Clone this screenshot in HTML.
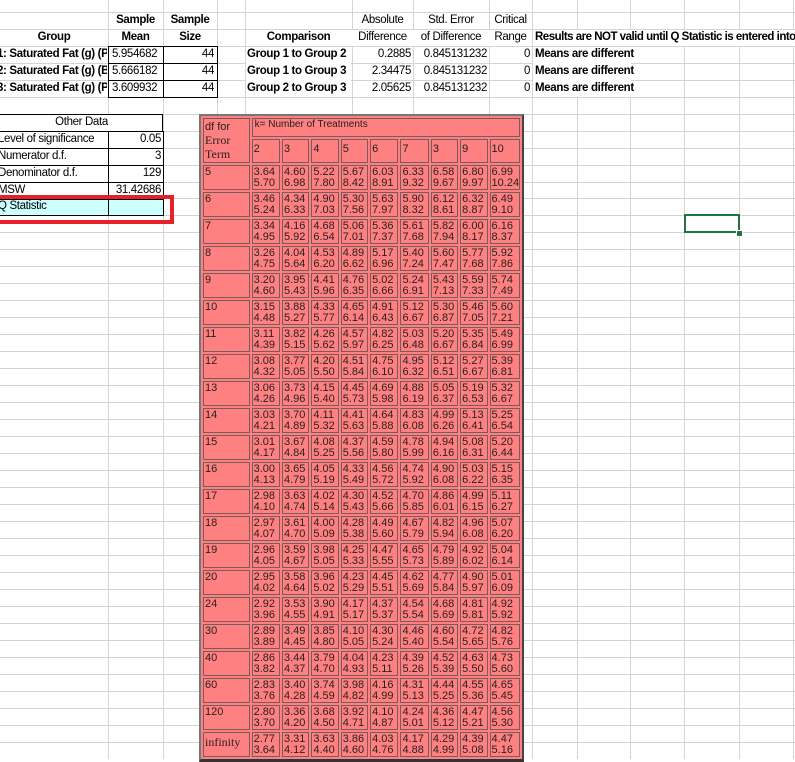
<!DOCTYPE html>
<html><head><meta charset="utf-8">
<style>
html,body{margin:0;padding:0}
body{width:795px;height:759px;overflow:hidden;position:relative;background:#fff;font-family:"Liberation Sans",Arial,sans-serif;font-size:11.5px;color:#000}
.hl{position:absolute;left:0;width:795px;height:1px;background:#d4d4d4}
.vl{position:absolute;top:0;height:759px;width:1px;background:#d4d4d4}
.t{position:absolute;height:17px;line-height:17px;white-space:nowrap;overflow:hidden;letter-spacing:-0.35px}
.b{font-weight:bold}
.r{text-align:right}
.c{text-align:center}
.bx{position:absolute;border:1px solid #000;box-sizing:border-box}
#q{position:absolute;left:199px;top:114px;width:325px;background:#ff8080;border:2px solid #777;border-right-color:#444;border-bottom:3px solid #333;border-collapse:separate;border-spacing:2px;table-layout:fixed}
#q td{background:#ff8080;border:1px solid #7a5a5a;padding:0 0 0 1px;vertical-align:top;font-family:"Liberation Sans",Arial,sans-serif;font-size:11px;line-height:11px;color:#2a2020;overflow:hidden;white-space:nowrap;box-sizing:border-box}
#q tr.d td{height:25px;padding-top:1px}
#q tr.d td.v{padding-top:1px}
#q td.sr,.sr{font-family:"Liberation Serif","Times New Roman",serif;font-size:12px}
</style></head><body>
<div class="hl" style="top:12px"></div><div class="hl" style="top:29px"></div><div class="hl" style="top:46px"></div><div class="hl" style="top:63px"></div><div class="hl" style="top:80px"></div><div class="hl" style="top:97px"></div><div class="hl" style="top:114px"></div><div class="hl" style="top:131px"></div><div class="hl" style="top:148px"></div><div class="hl" style="top:165px"></div><div class="hl" style="top:182px"></div><div class="hl" style="top:198px"></div><div class="hl" style="top:215px"></div><div class="hl" style="top:232px"></div><div class="hl" style="top:249px"></div><div class="hl" style="top:266px"></div><div class="hl" style="top:283px"></div><div class="hl" style="top:300px"></div><div class="hl" style="top:317px"></div><div class="hl" style="top:334px"></div><div class="hl" style="top:351px"></div><div class="hl" style="top:368px"></div><div class="hl" style="top:385px"></div><div class="hl" style="top:402px"></div><div class="hl" style="top:419px"></div><div class="hl" style="top:436px"></div><div class="hl" style="top:453px"></div><div class="hl" style="top:470px"></div><div class="hl" style="top:487px"></div><div class="hl" style="top:504px"></div><div class="hl" style="top:521px"></div><div class="hl" style="top:538px"></div><div class="hl" style="top:555px"></div><div class="hl" style="top:572px"></div><div class="hl" style="top:589px"></div><div class="hl" style="top:606px"></div><div class="hl" style="top:623px"></div><div class="hl" style="top:640px"></div><div class="hl" style="top:657px"></div><div class="hl" style="top:674px"></div><div class="hl" style="top:691px"></div><div class="hl" style="top:708px"></div><div class="hl" style="top:725px"></div><div class="hl" style="top:742px"></div>
<div class="vl" style="left:108px"></div><div class="vl" style="left:163px"></div><div class="vl" style="left:217px"></div><div class="vl" style="left:245px"></div><div class="vl" style="left:352px"></div><div class="vl" style="left:413px"></div><div class="vl" style="left:489px"></div><div class="vl" style="left:532px"></div><div class="vl" style="left:577px"></div><div class="vl" style="left:630px"></div><div class="vl" style="left:684px"></div><div class="vl" style="left:739px"></div><div class="vl" style="left:793px"></div>

<div style="position:absolute;left:246px;top:30px;width:286px;height:16px;background:#fff"></div>
<div style="position:absolute;left:533px;top:30px;width:262px;height:16px;background:#fff"></div>
<div style="position:absolute;left:533px;top:47px;width:98px;height:50px;background:#fff"></div>
<div style="position:absolute;left:246px;top:47px;width:105px;height:50px;background:#fff"></div>

<div class="t b c" style="left:108px;top:12px;width:55px">Sample</div>
<div class="t b c" style="left:163px;top:12px;width:54px">Sample</div>
<div class="t b c" style="left:0;top:29px;width:108px">Group</div>
<div class="t b c" style="left:108px;top:29px;width:55px">Mean</div>
<div class="t b c" style="left:163px;top:29px;width:54px">Size</div>
<div class="t b c" style="left:245px;top:29px;width:107px">Comparison</div>
<div class="t c" style="left:352px;top:12px;width:61px">Absolute</div>
<div class="t c" style="left:413px;top:12px;width:76px">Std. Error</div>
<div class="t c" style="left:489px;top:12px;width:43px">Critical</div>
<div class="t c" style="left:352px;top:29px;width:61px">Difference</div>
<div class="t c" style="left:413px;top:29px;width:76px">of Difference</div>
<div class="t c" style="left:489px;top:29px;width:43px">Range</div>
<div class="t b" style="left:535px;top:29px;width:260px;letter-spacing:-0.5px">Results are NOT valid until Q Statistic is entered into</div>

<div class="t b" style="left:0;top:46px;width:107px;text-indent:-3px">1: Saturated Fat (g) (Pe</div>
<div class="t b" style="left:0;top:63px;width:107px;text-indent:-3px">2: Saturated Fat (g) (Br</div>
<div class="t b" style="left:0;top:80px;width:107px;text-indent:-3px">3: Saturated Fat (g) (Pe</div>

<div class="bx" style="left:108px;top:46px;width:56px;height:18px"></div>
<div class="bx" style="left:108px;top:63px;width:56px;height:18px"></div>
<div class="bx" style="left:108px;top:80px;width:56px;height:18px"></div>
<div class="bx" style="left:163px;top:46px;width:55px;height:18px"></div>
<div class="bx" style="left:163px;top:63px;width:55px;height:18px"></div>
<div class="bx" style="left:163px;top:80px;width:55px;height:18px"></div>
<div class="t" style="left:112px;top:46px;width:50px">5.954682</div>
<div class="t" style="left:112px;top:63px;width:50px">5.666182</div>
<div class="t" style="left:112px;top:80px;width:50px">3.609932</div>
<div class="t r" style="left:163px;top:46px;width:51px">44</div>
<div class="t r" style="left:163px;top:63px;width:51px">44</div>
<div class="t r" style="left:163px;top:80px;width:51px">44</div>

<div class="t b" style="left:247px;top:46px;width:105px">Group 1 to Group 2</div>
<div class="t b" style="left:247px;top:63px;width:105px">Group 1 to Group 3</div>
<div class="t b" style="left:247px;top:80px;width:105px">Group 2 to Group 3</div>
<div class="t r" style="left:352px;top:46px;width:59px">0.2885</div>
<div class="t r" style="left:352px;top:63px;width:59px">2.34475</div>
<div class="t r" style="left:352px;top:80px;width:59px">2.05625</div>
<div class="t r" style="left:413px;top:46px;width:74px">0.845131232</div>
<div class="t r" style="left:413px;top:63px;width:74px">0.845131232</div>
<div class="t r" style="left:413px;top:80px;width:74px">0.845131232</div>
<div class="t r" style="left:489px;top:46px;width:41px">0</div>
<div class="t r" style="left:489px;top:63px;width:41px">0</div>
<div class="t r" style="left:489px;top:80px;width:41px">0</div>
<div class="t b" style="left:535px;top:46px;width:150px">Means are different</div>
<div class="t b" style="left:535px;top:63px;width:150px">Means are different</div>
<div class="t b" style="left:535px;top:80px;width:150px">Means are different</div>

<div style="position:absolute;left:0;top:199px;width:163px;height:16px;background:#ccffff"></div>
<div style="position:absolute;left:0;top:115px;width:162px;height:16px;background:#fff"></div>
<div class="bx" style="left:-2px;top:114px;width:165px;height:18px"></div>
<div class="bx" style="left:-2px;top:131px;width:111px;height:18px"></div><div class="bx" style="left:108px;top:131px;width:56px;height:18px"></div>
<div class="bx" style="left:-2px;top:148px;width:111px;height:18px"></div><div class="bx" style="left:108px;top:148px;width:56px;height:18px"></div>
<div class="bx" style="left:-2px;top:165px;width:111px;height:18px"></div><div class="bx" style="left:108px;top:165px;width:56px;height:18px"></div>
<div class="bx" style="left:-2px;top:182px;width:111px;height:18px"></div><div class="bx" style="left:108px;top:182px;width:56px;height:18px"></div>
<div class="bx" style="left:-2px;top:199px;width:111px;height:17px"></div><div class="bx" style="left:108px;top:199px;width:56px;height:17px"></div>
<div class="t c" style="left:0;top:114px;width:163px">Other Data</div>
<div class="t" style="left:0;top:131px;width:107px;text-indent:-2px">Level of significance</div>
<div class="t" style="left:0;top:148px;width:107px;text-indent:-2px">Numerator d.f.</div>
<div class="t" style="left:0;top:165px;width:107px;text-indent:-2px">Denominator d.f.</div>
<div class="t" style="left:0;top:182px;width:107px;text-indent:-2px">MSW</div>
<div class="t" style="left:0;top:198px;width:107px;text-indent:-2px">Q Statistic</div>
<div class="t r" style="left:108px;top:131px;width:53px">0.05</div>
<div class="t r" style="left:108px;top:148px;width:53px">3</div>
<div class="t r" style="left:108px;top:165px;width:53px">129</div>
<div class="t r" style="left:108px;top:182px;width:53px">31.42686</div>
<div style="position:absolute;left:-6px;top:195px;width:172px;height:21px;border:4px solid #e8202a"></div>

<div style="position:absolute;left:684px;top:214px;width:52px;height:15px;border:2px solid #217346"></div>
<div style="position:absolute;left:736px;top:230px;width:5px;height:5px;background:#217346;border:1px solid #fff"></div>

<table id="q">
<colgroup><col style="width:46px"><col style="width:28px"><col style="width:27px"><col style="width:27px"><col style="width:27px"><col style="width:28px"><col style="width:28px"><col style="width:27px"><col style="width:27px"><col style="width:30px"></colgroup>
<tr><td rowspan="2" style="line-height:13px;padding-top:2px;height:42px"><span style="font-size:11px;font-family:'Liberation Sans',Arial,sans-serif">df for</span><br><span class="sr">Error<br>Term</span></td><td colspan="9" style="font-size:10px;line-height:12px;height:18px;padding-left:2px">k= Number of Treatments</td></tr>
<tr><td style="padding-top:4px;height:22px">2</td><td style="padding-top:4px">3</td><td style="padding-top:4px">4</td><td style="padding-top:4px">5</td><td style="padding-top:4px">6</td><td style="padding-top:4px">7</td><td style="padding-top:4px">3</td><td style="padding-top:4px">9</td><td style="padding-top:4px">10</td></tr>
<tr class="d"><td>5</td><td class="v">3.64<br>5.70</td><td class="v">4.60<br>6.98</td><td class="v">5.22<br>7.80</td><td class="v">5.67<br>8.42</td><td class="v">6.03<br>8.91</td><td class="v">6.33<br>9.32</td><td class="v">6.58<br>9.67</td><td class="v">6.80<br>9.97</td><td class="v">6.99<br>10.24</td></tr>
<tr class="d"><td>6</td><td class="v">3.46<br>5.24</td><td class="v">4.34<br>6.33</td><td class="v">4.90<br>7.03</td><td class="v">5.30<br>7.56</td><td class="v">5.63<br>7.97</td><td class="v">5.90<br>8.32</td><td class="v">6.12<br>8.61</td><td class="v">6.32<br>8.87</td><td class="v">6.49<br>9.10</td></tr>
<tr class="d"><td>7</td><td class="v">3.34<br>4.95</td><td class="v">4.16<br>5.92</td><td class="v">4.68<br>6.54</td><td class="v">5.06<br>7.01</td><td class="v">5.36<br>7.37</td><td class="v">5.61<br>7.68</td><td class="v">5.82<br>7.94</td><td class="v">6.00<br>8.17</td><td class="v">6.16<br>8.37</td></tr>
<tr class="d"><td>8</td><td class="v">3.26<br>4.75</td><td class="v">4.04<br>5.64</td><td class="v">4.53<br>6.20</td><td class="v">4.89<br>6.62</td><td class="v">5.17<br>6.96</td><td class="v">5.40<br>7.24</td><td class="v">5.60<br>7.47</td><td class="v">5.77<br>7.68</td><td class="v">5.92<br>7.86</td></tr>
<tr class="d"><td>9</td><td class="v">3.20<br>4.60</td><td class="v">3.95<br>5.43</td><td class="v">4.41<br>5.96</td><td class="v">4.76<br>6.35</td><td class="v">5.02<br>6.66</td><td class="v">5.24<br>6.91</td><td class="v">5.43<br>7.13</td><td class="v">5.59<br>7.33</td><td class="v">5.74<br>7.49</td></tr>
<tr class="d"><td>10</td><td class="v">3.15<br>4.48</td><td class="v">3.88<br>5.27</td><td class="v">4.33<br>5.77</td><td class="v">4.65<br>6.14</td><td class="v">4.91<br>6.43</td><td class="v">5.12<br>6.67</td><td class="v">5.30<br>6.87</td><td class="v">5.46<br>7.05</td><td class="v">5.60<br>7.21</td></tr>
<tr class="d"><td>11</td><td class="v">3.11<br>4.39</td><td class="v">3.82<br>5.15</td><td class="v">4.26<br>5.62</td><td class="v">4.57<br>5.97</td><td class="v">4.82<br>6.25</td><td class="v">5.03<br>6.48</td><td class="v">5.20<br>6.67</td><td class="v">5.35<br>6.84</td><td class="v">5.49<br>6.99</td></tr>
<tr class="d"><td>12</td><td class="v">3.08<br>4.32</td><td class="v">3.77<br>5.05</td><td class="v">4.20<br>5.50</td><td class="v">4.51<br>5.84</td><td class="v">4.75<br>6.10</td><td class="v">4.95<br>6.32</td><td class="v">5.12<br>6.51</td><td class="v">5.27<br>6.67</td><td class="v">5.39<br>6.81</td></tr>
<tr class="d"><td>13</td><td class="v">3.06<br>4.26</td><td class="v">3.73<br>4.96</td><td class="v">4.15<br>5.40</td><td class="v">4.45<br>5.73</td><td class="v">4.69<br>5.98</td><td class="v">4.88<br>6.19</td><td class="v">5.05<br>6.37</td><td class="v">5.19<br>6.53</td><td class="v">5.32<br>6.67</td></tr>
<tr class="d"><td>14</td><td class="v">3.03<br>4.21</td><td class="v">3.70<br>4.89</td><td class="v">4.11<br>5.32</td><td class="v">4.41<br>5.63</td><td class="v">4.64<br>5.88</td><td class="v">4.83<br>6.08</td><td class="v">4.99<br>6.26</td><td class="v">5.13<br>6.41</td><td class="v">5.25<br>6.54</td></tr>
<tr class="d"><td>15</td><td class="v">3.01<br>4.17</td><td class="v">3.67<br>4.84</td><td class="v">4.08<br>5.25</td><td class="v">4.37<br>5.56</td><td class="v">4.59<br>5.80</td><td class="v">4.78<br>5.99</td><td class="v">4.94<br>6.16</td><td class="v">5.08<br>6.31</td><td class="v">5.20<br>6.44</td></tr>
<tr class="d"><td>16</td><td class="v">3.00<br>4.13</td><td class="v">3.65<br>4.79</td><td class="v">4.05<br>5.19</td><td class="v">4.33<br>5.49</td><td class="v">4.56<br>5.72</td><td class="v">4.74<br>5.92</td><td class="v">4.90<br>6.08</td><td class="v">5.03<br>6.22</td><td class="v">5.15<br>6.35</td></tr>
<tr class="d"><td>17</td><td class="v">2.98<br>4.10</td><td class="v">3.63<br>4.74</td><td class="v">4.02<br>5.14</td><td class="v">4.30<br>5.43</td><td class="v">4.52<br>5.66</td><td class="v">4.70<br>5.85</td><td class="v">4.86<br>6.01</td><td class="v">4.99<br>6.15</td><td class="v">5.11<br>6.27</td></tr>
<tr class="d"><td>18</td><td class="v">2.97<br>4.07</td><td class="v">3.61<br>4.70</td><td class="v">4.00<br>5.09</td><td class="v">4.28<br>5.38</td><td class="v">4.49<br>5.60</td><td class="v">4.67<br>5.79</td><td class="v">4.82<br>5.94</td><td class="v">4.96<br>6.08</td><td class="v">5.07<br>6.20</td></tr>
<tr class="d"><td>19</td><td class="v">2.96<br>4.05</td><td class="v">3.59<br>4.67</td><td class="v">3.98<br>5.05</td><td class="v">4.25<br>5.33</td><td class="v">4.47<br>5.55</td><td class="v">4.65<br>5.73</td><td class="v">4.79<br>5.89</td><td class="v">4.92<br>6.02</td><td class="v">5.04<br>6.14</td></tr>
<tr class="d"><td>20</td><td class="v">2.95<br>4.02</td><td class="v">3.58<br>4.64</td><td class="v">3.96<br>5.02</td><td class="v">4.23<br>5.29</td><td class="v">4.45<br>5.51</td><td class="v">4.62<br>5.69</td><td class="v">4.77<br>5.84</td><td class="v">4.90<br>5.97</td><td class="v">5.01<br>6.09</td></tr>
<tr class="d"><td>24</td><td class="v">2.92<br>3.96</td><td class="v">3.53<br>4.55</td><td class="v">3.90<br>4.91</td><td class="v">4.17<br>5.17</td><td class="v">4.37<br>5.37</td><td class="v">4.54<br>5.54</td><td class="v">4.68<br>5.69</td><td class="v">4.81<br>5.81</td><td class="v">4.92<br>5.92</td></tr>
<tr class="d"><td>30</td><td class="v">2.89<br>3.89</td><td class="v">3.49<br>4.45</td><td class="v">3.85<br>4.80</td><td class="v">4.10<br>5.05</td><td class="v">4.30<br>5.24</td><td class="v">4.46<br>5.40</td><td class="v">4.60<br>5.54</td><td class="v">4.72<br>5.65</td><td class="v">4.82<br>5.76</td></tr>
<tr class="d"><td>40</td><td class="v">2.86<br>3.82</td><td class="v">3.44<br>4.37</td><td class="v">3.79<br>4.70</td><td class="v">4.04<br>4.93</td><td class="v">4.23<br>5.11</td><td class="v">4.39<br>5.26</td><td class="v">4.52<br>5.39</td><td class="v">4.63<br>5.50</td><td class="v">4.73<br>5.60</td></tr>
<tr class="d"><td>60</td><td class="v">2.83<br>3.76</td><td class="v">3.40<br>4.28</td><td class="v">3.74<br>4.59</td><td class="v">3.98<br>4.82</td><td class="v">4.16<br>4.99</td><td class="v">4.31<br>5.13</td><td class="v">4.44<br>5.25</td><td class="v">4.55<br>5.36</td><td class="v">4.65<br>5.45</td></tr>
<tr class="d"><td>120</td><td class="v">2.80<br>3.70</td><td class="v">3.36<br>4.20</td><td class="v">3.68<br>4.50</td><td class="v">3.92<br>4.71</td><td class="v">4.10<br>4.87</td><td class="v">4.24<br>5.01</td><td class="v">4.36<br>5.12</td><td class="v">4.47<br>5.21</td><td class="v">4.56<br>5.30</td></tr>
<tr class="d"><td class="sr" style="padding-top:4px">infinity</td><td>2.77<br>3.64</td><td>3.31<br>4.12</td><td>3.63<br>4.40</td><td>3.86<br>4.60</td><td>4.03<br>4.76</td><td>4.17<br>4.88</td><td>4.29<br>4.99</td><td>4.39<br>5.08</td><td>4.47<br>5.16</td></tr>
</table>
</body></html>
